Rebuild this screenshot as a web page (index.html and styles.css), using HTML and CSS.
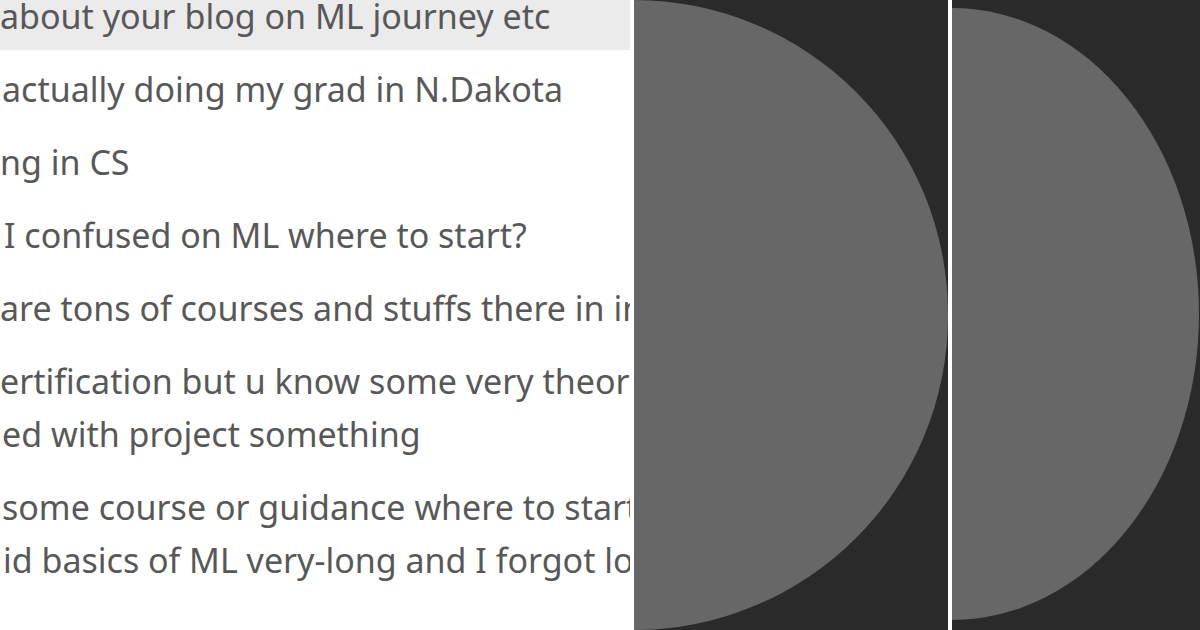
FILE: index.html
```html
<!DOCTYPE html>
<html>
<head>
<meta charset="utf-8">
<link rel="stylesheet" href="styles.css">
</head>
<body>
<div class="screen">
  <div class="chat">
    <div class="msg active">about your blog on ML journey etc</div>
    <div class="msg pad2">actually doing my grad in N.Dakota</div>
    <div class="msg">ng in CS</div>
    <div class="msg pad4">I confused on ML where to start?</div>
    <div class="msg">are tons of courses and stuffs there in internet</div>
    <div class="msg">ertification but u know some very theoretical<br><span class="pad2">ed with project something</span></div>
    <div class="msg pad2">some course or guidance where to start<br><span class="pad1">id basics of ML very-long and I forgot lot</span></div>
  </div>
  <div class="panel first">
    <div class="half big"></div>
  </div>
  <div class="panel second">
    <div class="half small"></div>
  </div>
</div>
</body>
</html>
```

FILE: styles.css
```css
html, body {
  margin: 0;
  padding: 0;
  background: #ffffff;
}
.screen {
  display: flex;
  width: 1200px;
  height: 630px;
  overflow: hidden;
  background: #ffffff;
}
.chat {
  width: 630px;
  flex: none;
  overflow: hidden;
  margin-right: 4px;
}
.msg {
  font-family: "Noto Sans", "Open Sans", sans-serif;
  font-size: 34px;
  line-height: 53px;
  color: #585858;
  white-space: nowrap;
  padding: 7px 0 7px 0;
  margin-bottom: 6px;
}
.msg:first-child {
  margin-top: -17px;
}
.msg.active {
  background: #ebebeb;
}
.pad1 { padding-left: 1px; }
.pad2 { padding-left: 2px; }
.pad4 { padding-left: 4px; }
.msg span { display: inline-block; }
.panel {
  background: #2a2a2a;
  height: 630px;
  display: flex;
  align-items: flex-start;
}
.panel.first {
  width: 314px;
  flex: none;
  margin-right: 4px;
}
.panel.second {
  flex: 1;
  padding-top: 8px;
  box-sizing: border-box;
}
.half {
  background: #676767;
}
.half.big {
  width: 315px;
  height: 630px;
  border-radius: 0 315px 315px 0 / 0 315px 315px 0;
}
.half.small {
  width: 247px;
  height: 612px;
  border-radius: 0 247px 247px 0 / 0 306px 306px 0;
}
```
